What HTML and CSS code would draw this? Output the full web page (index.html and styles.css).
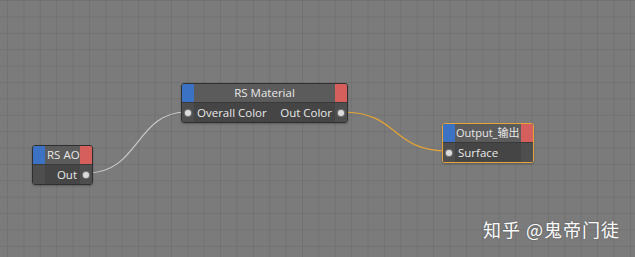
FILE: index.html
```html
<!DOCTYPE html>
<html lang="zh">
<head>
    <meta charset="UTF-8">
    <title>Node Editor</title>
    <link rel="stylesheet" href="styles.css">
</head>
<body>
    <div class="canvas">
        <svg class="wires" width="635" height="257">
            <path d="M87 173 C 140 173, 135 112, 187 112" stroke="#c9c9c9" stroke-width="1.2" fill="none"/>
            <path d="M342 112 C 400 112, 390 151, 448 151" stroke="#e3a436" stroke-width="1.2" fill="none"/>
        </svg>

        <div class="node node-material">
            <div class="node-head">
                <span class="tab tab-in"></span>
                <span class="title">RS Material</span>
                <span class="tab tab-out"></span>
            </div>
            <div class="node-body">
                <span class="port"><i></i></span>
                <span class="label">Overall Color</span>
                <span class="label right">Out Color</span>
                <span class="port"><i></i></span>
            </div>
        </div>

        <div class="node node-ao">
            <div class="node-head">
                <span class="tab tab-in"></span>
                <span class="title">RS AO</span>
                <span class="tab tab-out"></span>
            </div>
            <div class="node-body">
                <span class="port empty"></span>
                <span class="label right">Out</span>
                <span class="port"><i></i></span>
            </div>
        </div>

        <div class="node node-output selected">
            <div class="node-head">
                <span class="tab tab-in"></span>
                <span class="title">Output_输出</span>
                <span class="tab tab-out"></span>
            </div>
            <div class="node-body">
                <span class="port"><i></i></span>
                <span class="label">Surface</span>
                <span class="port empty"></span>
            </div>
        </div>

        <div class="watermark">知乎 @鬼帝门徒</div>
    </div>
</body>
</html>
```

FILE: styles.css
```css
body {
    margin: 0;
    background: #7b7b7b;
    font-family: "Open Sans", "Noto Sans", "Noto Sans CJK SC", sans-serif;
}

/* fondo con rejilla */
.canvas {
    position: relative;
    width: 635px;
    height: 257px;
    overflow: hidden;
    background-color: #7b7b7b;
    background-image:
        linear-gradient(to right, rgba(0, 0, 0, 0.07) 1px, transparent 1px),
        linear-gradient(to bottom, rgba(0, 0, 0, 0.07) 1px, transparent 1px);
    background-size: 16.4px 16.4px;
    background-position: 7px 0;
}

.wires {
    position: absolute;
    top: 0;
    left: 0;
}

.node {
    position: absolute;
    display: flex;
    flex-direction: column;
    border: 1px solid #2f2f2f;
    border-radius: 3px;
    overflow: hidden;
    box-shadow: 0 1px 2px rgba(0, 0, 0, 0.25);
    color: #e8e8e8;
    font-size: 11.5px;
}

.node.selected {
    border-color: #e8a33a;
}

.node-material {
    left: 181px;
    top: 83px;
    width: 165px;
}

.node-ao {
    left: 32px;
    top: 145px;
    width: 59px;
}

.node-output {
    left: 442px;
    top: 123px;
    width: 90px;
}

.node-head {
    display: flex;
    height: 18px;
    background: #5b5b5b;
    border-bottom: 1px solid #3a3a3a;
}

.tab {
    width: 12px;
    flex: none;
}

.tab-in {
    background: #3b72c4;
}

.tab-out {
    background: #d55f5d;
}

.title {
    flex: 1;
    text-align: center;
    line-height: 18px;
    white-space: nowrap;
    overflow: hidden;
}

.node-ao .title,
.node-output .title {
    text-align: left;
    padding-left: 2px;
}

.node-output .title {
    font-size: 11px;
    padding-left: 1px;
}

.node-body {
    display: flex;
    align-items: center;
    height: 19px;
    background: #454545;
}

.port {
    width: 12px;
    height: 19px;
    flex: none;
    display: flex;
    align-items: center;
    justify-content: center;
    background: #4e4e4e;
}

.port i {
    width: 6px;
    height: 6px;
    border-radius: 50%;
    background: #dcdcdc;
    box-shadow: 0 0 0 1px #777;
}

.label {
    flex: 1;
    padding: 0 3px;
    white-space: nowrap;
    line-height: 19px;
}

.label.right {
    text-align: right;
}

.watermark {
    position: absolute;
    left: 483px;
    top: 216px;
    color: #fafafa;
    font-family: "Noto Sans CJK SC", sans-serif;
    font-size: 18px;
    letter-spacing: 1px;
    text-shadow: 0 0 2px rgba(0, 0, 0, 0.3);
}
```
